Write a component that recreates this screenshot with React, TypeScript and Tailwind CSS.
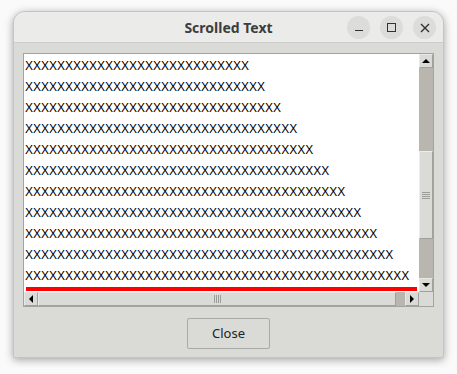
import React from 'react';

const lines = Array.from({ length: 11 }, (_, i) => 'X'.repeat(28 + i * 2));

const Arrow: React.FC<{ dir: 'up' | 'down' | 'left' | 'right' }> = ({ dir }) => {
  const pts = {
    up: '1,7 5,3 9,7',
    down: '1,3 5,7 9,3',
    left: '7,1 3,5 7,9',
    right: '3,1 7,5 3,9',
  }[dir];
  return (
    <svg width="10" height="10" viewBox="0 0 10 10">
      <polygon points={pts} fill="#000" />
    </svg>
  );
};

const App: React.FC = () => {
  return (
    <div className="w-[457px] h-[374px] bg-[#fafafa] pt-[11px] pl-[13px]" style={{ fontFamily: '"Noto Sans", sans-serif' }}>
      <div className="w-[431px] h-[347px] rounded-t-[12px] rounded-b-[2px] bg-[#dadad7] border border-[#c4c4c2] shadow-[0_2px_8px_rgba(0,0,0,0.35)] flex flex-col overflow-hidden">
        {/* title bar */}
        <div className="h-[31px] shrink-0 bg-[#ebebe9] border-b border-[#cdcdcb] relative flex items-center justify-center">
          <span className="text-[14px] font-bold text-[#3d3d3d]">Scrolled Text</span>
          <div className="absolute right-[7px] top-[4px] flex gap-[10px]">
            <div className="w-[23px] h-[23px] rounded-full bg-[#dcdcdb] flex items-center justify-center">
              <div className="w-[8px] h-[1.5px] bg-[#333] mt-[6px]" />
            </div>
            <div className="w-[23px] h-[23px] rounded-full bg-[#dcdcdb] flex items-center justify-center">
              <div className="w-[9px] h-[9px] border-[1.5px] border-[#333]" />
            </div>
            <div className="w-[23px] h-[23px] rounded-full bg-[#dcdcdb] flex items-center justify-center">
              <svg width="10" height="10" viewBox="0 0 10 10">
                <path d="M1 1 L9 9 M9 1 L1 9" stroke="#333" strokeWidth="1.4" />
              </svg>
            </div>
          </div>
        </div>

        {/* body */}
        <div className="flex-1 flex flex-col items-center pt-[10px]">
          <div className="w-[411px] h-[254px] border border-[#a3a3a0] grid grid-cols-[395px_14px] grid-rows-[238px_14px]">
            <div className="bg-white overflow-hidden pl-[1px] pt-[2px]" style={{ fontFamily: '"Liberation Sans", sans-serif' }}>
              {lines.map((l, i) => (
                <div key={i} className="h-[21px] leading-[21px] text-[12px] text-black whitespace-nowrap">{l}</div>
              ))}
              <div className="h-[4px] bg-[#ff0000] w-[391px] ml-[1px]" />
            </div>
            {/* vertical scrollbar */}
            <div className="bg-[#b9b6b0] flex flex-col">
              <div className="h-[14px] bg-[#dadad7] border border-[#e8e8e6] border-r-[#a0a09d] border-b-[#a0a09d] flex items-center justify-center"><Arrow dir="up" /></div>
              <div className="h-[83px]" />
              <div className="h-[88px] bg-[#dadad7] border border-[#ececea] border-r-[#a0a09d] border-b-[#a0a09d] flex flex-col items-center justify-center gap-[1px]">
                {[0, 1, 2, 3].map(k => <div key={k} className="w-[8px] h-[1px] bg-[#9c9c98]" />)}
              </div>
              <div className="flex-1" />
              <div className="h-[14px] bg-[#dadad7] border border-[#e8e8e6] border-r-[#a0a09d] border-b-[#a0a09d] flex items-center justify-center"><Arrow dir="down" /></div>
            </div>
            {/* horizontal scrollbar */}
            <div className="bg-[#b9b6b0] flex">
              <div className="w-[14px] bg-[#dadad7] border border-[#e8e8e6] border-r-[#a0a09d] border-b-[#a0a09d] flex items-center justify-center"><Arrow dir="left" /></div>
              <div className="w-[358px] bg-[#dadad7] border border-[#ececea] border-r-[#a0a09d] border-b-[#a0a09d] flex items-center justify-center gap-[1px]">
                {[0, 1, 2, 3].map(k => <div key={k} className="w-[1px] h-[8px] bg-[#9c9c98]" />)}
              </div>
              <div className="flex-1" />
              <div className="w-[14px] bg-[#dadad7] border border-[#e8e8e6] border-r-[#a0a09d] border-b-[#a0a09d] flex items-center justify-center"><Arrow dir="right" /></div>
            </div>
            <div className="bg-[#dadad7]" />
          </div>

          <button className="mt-[11px] w-[83px] h-[31px] border border-[#a9a9a6] rounded-[2px] bg-[#dadad7] text-[13px] text-[#222]">Close</button>
        </div>
      </div>
    </div>
  );
};

export default App;
